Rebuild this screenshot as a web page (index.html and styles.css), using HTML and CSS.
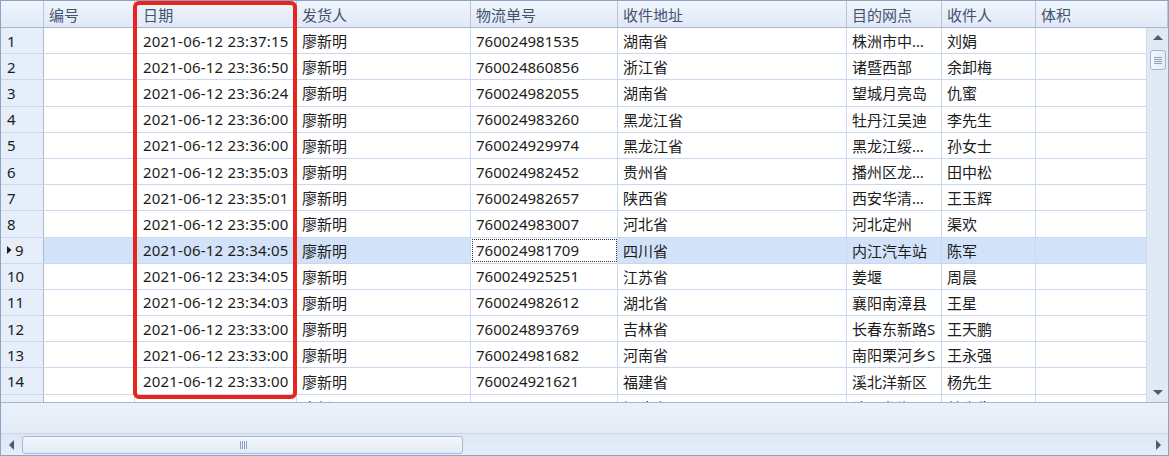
FILE: index.html
```html
<!DOCTYPE html>
<html lang="zh-CN">
<head>
    <meta charset="UTF-8">
    <title>运单列表</title>
    <link rel="stylesheet" href="styles.css">
</head>
<body>
    <div class="grid">
        <div class="header">
            <div class="cell c-rh"></div>
            <div class="cell c-no">编号</div>
            <div class="cell c-date">日期</div>
            <div class="cell c-sender">发货人</div>
            <div class="cell c-track">物流单号</div>
            <div class="cell c-addr">收件地址</div>
            <div class="cell c-site">目的网点</div>
            <div class="cell c-recv">收件人</div>
            <div class="cell c-vol last">体积</div>
        </div>

        <div class="main">
            <div class="rows">
                <div class="row"><div class="cell c-rh">1</div><div class="cell c-no"></div><div class="cell c-date">2021-06-12 23:37:15</div><div class="cell c-sender">廖新明</div><div class="cell c-track">760024981535</div><div class="cell c-addr">湖南省</div><div class="cell c-site">株洲市中…</div><div class="cell c-recv">刘娟</div><div class="cell c-vol"></div></div>
                <div class="row"><div class="cell c-rh">2</div><div class="cell c-no"></div><div class="cell c-date">2021-06-12 23:36:50</div><div class="cell c-sender">廖新明</div><div class="cell c-track">760024860856</div><div class="cell c-addr">浙江省</div><div class="cell c-site">诸暨西部</div><div class="cell c-recv">余卸梅</div><div class="cell c-vol"></div></div>
                <div class="row"><div class="cell c-rh">3</div><div class="cell c-no"></div><div class="cell c-date">2021-06-12 23:36:24</div><div class="cell c-sender">廖新明</div><div class="cell c-track">760024982055</div><div class="cell c-addr">湖南省</div><div class="cell c-site">望城月亮岛</div><div class="cell c-recv">仇蜜</div><div class="cell c-vol"></div></div>
                <div class="row"><div class="cell c-rh">4</div><div class="cell c-no"></div><div class="cell c-date">2021-06-12 23:36:00</div><div class="cell c-sender">廖新明</div><div class="cell c-track">760024983260</div><div class="cell c-addr">黑龙江省</div><div class="cell c-site">牡丹江吴迪</div><div class="cell c-recv">李先生</div><div class="cell c-vol"></div></div>
                <div class="row"><div class="cell c-rh">5</div><div class="cell c-no"></div><div class="cell c-date">2021-06-12 23:36:00</div><div class="cell c-sender">廖新明</div><div class="cell c-track">760024929974</div><div class="cell c-addr">黑龙江省</div><div class="cell c-site">黑龙江绥…</div><div class="cell c-recv">孙女士</div><div class="cell c-vol"></div></div>
                <div class="row"><div class="cell c-rh">6</div><div class="cell c-no"></div><div class="cell c-date">2021-06-12 23:35:03</div><div class="cell c-sender">廖新明</div><div class="cell c-track">760024982452</div><div class="cell c-addr">贵州省</div><div class="cell c-site">播州区龙…</div><div class="cell c-recv">田中松</div><div class="cell c-vol"></div></div>
                <div class="row"><div class="cell c-rh">7</div><div class="cell c-no"></div><div class="cell c-date">2021-06-12 23:35:01</div><div class="cell c-sender">廖新明</div><div class="cell c-track">760024982657</div><div class="cell c-addr">陕西省</div><div class="cell c-site">西安华清…</div><div class="cell c-recv">王玉辉</div><div class="cell c-vol"></div></div>
                <div class="row"><div class="cell c-rh">8</div><div class="cell c-no"></div><div class="cell c-date">2021-06-12 23:35:00</div><div class="cell c-sender">廖新明</div><div class="cell c-track">760024983007</div><div class="cell c-addr">河北省</div><div class="cell c-site">河北定州</div><div class="cell c-recv">渠欢</div><div class="cell c-vol"></div></div>
                <div class="row selected"><div class="cell c-rh"><svg class="current" width="5" height="8" viewBox="0 0 5 8"><polygon points="0,0 0,8 4.5,4" fill="#1c1c1c"/></svg>9</div><div class="cell c-no"></div><div class="cell c-date">2021-06-12 23:34:05</div><div class="cell c-sender">廖新明</div><div class="cell c-track focus">760024981709</div><div class="cell c-addr">四川省</div><div class="cell c-site">内江汽车站</div><div class="cell c-recv">陈军</div><div class="cell c-vol"></div></div>
                <div class="row"><div class="cell c-rh">10</div><div class="cell c-no"></div><div class="cell c-date">2021-06-12 23:34:05</div><div class="cell c-sender">廖新明</div><div class="cell c-track">760024925251</div><div class="cell c-addr">江苏省</div><div class="cell c-site">姜堰</div><div class="cell c-recv">周晨</div><div class="cell c-vol"></div></div>
                <div class="row"><div class="cell c-rh">11</div><div class="cell c-no"></div><div class="cell c-date">2021-06-12 23:34:03</div><div class="cell c-sender">廖新明</div><div class="cell c-track">760024982612</div><div class="cell c-addr">湖北省</div><div class="cell c-site">襄阳南漳县</div><div class="cell c-recv">王星</div><div class="cell c-vol"></div></div>
                <div class="row"><div class="cell c-rh">12</div><div class="cell c-no"></div><div class="cell c-date">2021-06-12 23:33:00</div><div class="cell c-sender">廖新明</div><div class="cell c-track">760024893769</div><div class="cell c-addr">吉林省</div><div class="cell c-site">长春东新路S</div><div class="cell c-recv">王天鹏</div><div class="cell c-vol"></div></div>
                <div class="row"><div class="cell c-rh">13</div><div class="cell c-no"></div><div class="cell c-date">2021-06-12 23:33:00</div><div class="cell c-sender">廖新明</div><div class="cell c-track">760024981682</div><div class="cell c-addr">河南省</div><div class="cell c-site">南阳栗河乡S</div><div class="cell c-recv">王永强</div><div class="cell c-vol"></div></div>
                <div class="row"><div class="cell c-rh">14</div><div class="cell c-no"></div><div class="cell c-date">2021-06-12 23:33:00</div><div class="cell c-sender">廖新明</div><div class="cell c-track">760024921621</div><div class="cell c-addr">福建省</div><div class="cell c-site">溪北洋新区</div><div class="cell c-recv">杨先生</div><div class="cell c-vol"></div></div>
                <!-- last row only shows the tops of its glyphs -->
                <div class="row"><div class="cell c-rh"></div><div class="cell c-no"></div><div class="cell c-date"></div><div class="cell c-sender">廖新明</div><div class="cell c-track"></div><div class="cell c-addr">福建省</div><div class="cell c-site">漳州龙海…</div><div class="cell c-recv">林先生</div><div class="cell c-vol"></div></div>
            </div>
            <div class="vscroll">
                <div class="sbtn">
                    <svg width="10" height="6" viewBox="0 0 10 6"><polygon points="0,5 10,5 5,0" fill="#4b5876"/></svg>
                </div>
                <div class="vthumb">
                    <svg width="8" height="8" viewBox="0 0 8 8"><path d="M0 1.5H8M0 3.5H8M0 5.5H8M0 7.5H8" stroke="#8ea2c0" stroke-width="1"/></svg>
                </div>
                <div class="track"></div>
                <div class="sbtn">
                    <svg width="10" height="6" viewBox="0 0 10 6"><polygon points="0,1 10,1 5,6" fill="#4b5876"/></svg>
                </div>
            </div>
        </div>

        <div class="footer"></div>

        <div class="hscroll">
            <div class="hbtn">
                <svg width="6" height="10" viewBox="0 0 6 10"><polygon points="5,0 5,10 0,5" fill="#4b5876"/></svg>
            </div>
            <div class="hthumb">
                <svg width="8" height="8" viewBox="0 0 8 8"><path d="M1.5 0V8M3.5 0V8M5.5 0V8M7.5 0V8" stroke="#8ea2c0" stroke-width="1"/></svg>
            </div>
            <div class="track"></div>
            <div class="hbtn">
                <svg width="6" height="10" viewBox="0 0 6 10"><polygon points="1,0 1,10 6,5" fill="#4b5876"/></svg>
            </div>
        </div>

        <!-- red mark drawn over the date column -->
        <div class="mark"></div>
    </div>
</body>
</html>
```

FILE: styles.css
```css
body {
    margin: 0;
    font-family: "Noto Sans", "Noto Sans CJK SC", sans-serif;
    font-size: 15px;
    color: #1c1c1c;
    background: #ffffff;
}
.grid {
    position: relative;
    width: 1169px;
    height: 456px;
    box-sizing: border-box;
    border: 1px solid #8ea3c2;
    display: flex;
    flex-direction: column;
    overflow: hidden;
    background: #ffffff;
}

/* columns */
.cell {
    flex: none;
    box-sizing: border-box;
    display: flex;
    align-items: center;
    padding: 0 5px;
    white-space: nowrap;
    overflow: hidden;
    border-right: 1px solid #c8d8f0;
}
.c-rh { width: 43px; padding-left: 6px; }
.c-no { width: 91px; }
.c-date { width: 162px; padding-left: 8px; letter-spacing: 0.2px; }
.c-sender { width: 174px; }
.c-track { width: 147px; }
.c-addr { width: 229px; }
.c-site { width: 95px; padding-right: 0; }
.c-recv { width: 94px; }
.c-vol { width: 110px; border-right: none; }

/* header */
.header {
    flex: none;
    display: flex;
    height: 27px;
    box-sizing: border-box;
    background: linear-gradient(#f0f5fc, #e0e9f6);
    border-bottom: 1px solid #a6b8d4;
    color: #44526f;
}
.header .cell {
    border-right: 1px solid #b5c6df;
    padding-top: 1px;
}
.header .last {
    flex: 1;
}

/* body */
.main {
    flex: none;
    display: flex;
    height: 374px;
}
.rows {
    flex: 1;
    overflow: hidden;
}
.row {
    display: flex;
    height: 26.2px;
    box-sizing: border-box;
    border-bottom: 1px solid #c8d8f0;
}
.row .c-rh {
    background: #e6eef9;
    border-right: 1px solid #a9bbd6;
}
.row.selected .cell {
    background: #d2e2f8;
}
.row.selected .c-rh {
    background: #e6eef9;
    padding-left: 6px;
}
.current {
    margin-right: 3px;
}
.row .focus {
    background: #ffffff !important;
    outline: 1px dotted #303030;
    outline-offset: -2px;
}

/* vertical scrollbar */
.vscroll {
    width: 22px;
    flex: none;
    display: flex;
    flex-direction: column;
    align-items: center;
    background: #e1e9f5;
    border-left: 1px solid #d0dcee;
    box-sizing: border-box;
}
.sbtn {
    height: 20px;
    flex: none;
    display: flex;
    align-items: center;
    justify-content: center;
}
.vthumb {
    width: 16px;
    height: 20px;
    margin-top: 2px;
    box-sizing: border-box;
    border: 1px solid #a3b6d3;
    border-radius: 3px;
    background: linear-gradient(90deg, #f4f7fc, #e3ebf6);
    display: flex;
    align-items: center;
    justify-content: center;
}
.track {
    flex: 1;
}

/* footer panel */
.footer {
    flex: none;
    height: 31px;
    box-sizing: border-box;
    border-top: 1px solid #a3b6d2;
    background: linear-gradient(#ebf1f9, #e2eaf6);
}

/* horizontal scrollbar */
.hscroll {
    flex: none;
    height: 22px;
    display: flex;
    align-items: center;
    background: linear-gradient(#dde6f3, #e6edf7);
    border-top: 1px solid #cbd7ea;
    box-sizing: border-box;
}
.hbtn {
    width: 21px;
    flex: none;
    display: flex;
    justify-content: center;
}
.hthumb {
    width: 441px;
    height: 18px;
    box-sizing: border-box;
    border: 1px solid #a8bad5;
    border-radius: 3px;
    background: linear-gradient(#f4f7fc, #e2eaf5);
    display: flex;
    align-items: center;
    justify-content: center;
}

/* annotation box */
.mark {
    position: absolute;
    left: 132px;
    top: 0;
    width: 164px;
    height: 398px;
    box-sizing: border-box;
    border: 4px solid #e8241c;
    border-radius: 6px;
}
```
